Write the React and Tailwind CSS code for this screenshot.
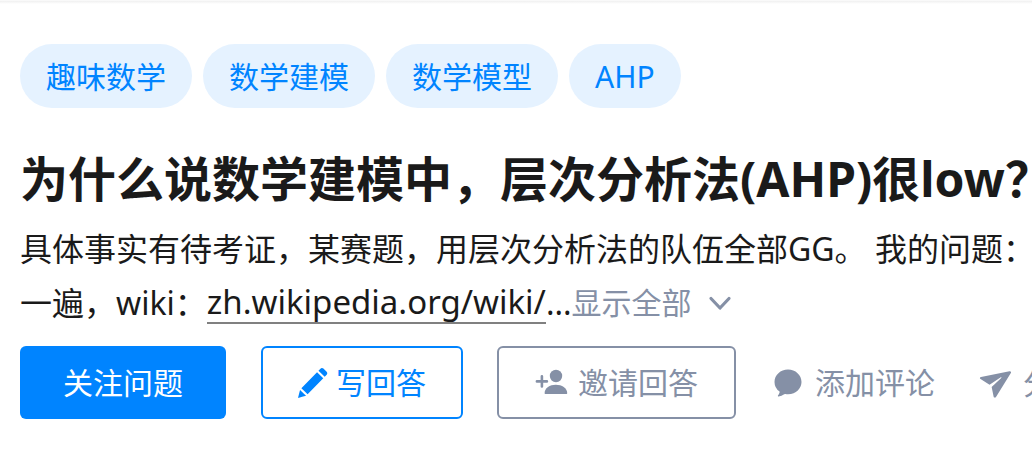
const topics = ['趣味数学', '数学建模', '数学模型', 'AHP'];

function PencilIcon() {
  return (
    <svg viewBox="0 0 12 12" className="size-[30px] shrink-0" fill="currentColor" aria-hidden="true">
      <path d="M.423 10.32L0 12l1.667-.474 1.55-.44-2.4-2.33-.394 1.564zM10.153.233c-.327-.318-.85-.31-1.17.018l-.793.817 2.49 2.414.792-.814c.318-.328.312-.852-.017-1.17l-1.3-1.263zM3.84 10.536L1.35 8.122l6.265-6.46 2.49 2.414-6.265 6.46z" />
    </svg>
  );
}

function InviteIcon() {
  return (
    <svg viewBox="0 0 34 30" className="h-[30px] w-[34px] shrink-0" fill="currentColor" aria-hidden="true">
      <path d="M5.600 8.200a1.300 1.300 0 0 1 2.600 0V12h3.600a1.400 1.400 0 0 1 0 2.800H8.200v3.700a1.300 1.300 0 0 1-2.600 0v-3.700H2a1.400 1.400 0 0 1 0-2.800h3.600z" />
      <circle cx="21" cy="8" r="6.200" />
      <path d="M10.200 26c-.4 0-.6-.3-.6-.7 0-5.300 5.200-8.500 11.200-8.500s11.400 3.200 11.400 8.500c0 .4-.2.7-.6.7z" />
    </svg>
  );
}

function CommentIcon() {
  return (
    <svg viewBox="0 0 24 24" className="size-9 shrink-0" fill="currentColor" aria-hidden="true">
      <path d="M10.241 19.313a.97.97 0 0 0-.77.2 7.908 7.908 0 0 1-3.772 1.482.409.409 0 0 1-.38-.637 5.825 5.825 0 0 0 1.110-2.237.605.605 0 0 0-.227-.590A7.935 7.935 0 0 1 3 11.250C3 6.700 7.030 3 12 3s9 3.700 9 8.250-4.373 9.108-10.759 8.063z" />
    </svg>
  );
}

function ShareIcon() {
  return (
    <svg viewBox="0 0 24 24" className="size-9 shrink-0" fill="currentColor" aria-hidden="true">
      <path d="M2 8L21 4.200c.8-.15 1.300.6.900 1.200L12 21.300c-.5.8-1.500.6-1.600-.3L9.100 14.700l6.400-6c.3-.3.100-.7-.3-.5l-7.500 4.900L1.700 9.400C1 8.900 1.200 8.200 2 8z" />
    </svg>
  );
}

function ChevronIcon() {
  return (
    <svg viewBox="0 0 24 16" className="h-4 w-6" fill="none" stroke="currentColor" strokeWidth="3.2" strokeLinecap="round" strokeLinejoin="round" aria-hidden="true">
      <path d="M3 3.500l9 9.500 9-9.500" />
    </svg>
  );
}

export default function App() {
  return (
    <div className="overflow-hidden bg-white font-['Noto_Sans','Noto_Sans_CJK_SC',sans-serif] text-[#1a1a1a]">
      <div className="h-1 border-t border-[#f9f9f9] bg-linear-to-b from-[#f0f0f0] to-white" />
      <main className="whitespace-nowrap px-5 pt-10 pb-8">
        <nav className="flex gap-[11px]" aria-label="话题">
          {topics.map((topic) => (
            <a key={topic} href="#" className="flex h-16 items-center rounded-full bg-[#e5f2ff] px-[26px] text-[30px] text-[#0084ff]">
              {topic}
            </a>
          ))}
        </nav>
        <h1 className="mt-9 text-[48px] leading-[70px] font-bold">为什么说数学建模中，层次分析法(AHP)很low？</h1>
        <div className="mt-2 text-[32px] leading-[54px]">
          <p>具体事实有待考证，某赛题，用层次分析法的队伍全部GG。 我的问题：</p>
          <p className="flex items-center">
            <span>一遍，wiki：</span>
            <a href="#" className="border-b-2 border-[#808080] text-[33px] leading-10">zh.wikipedia.org/wiki/</a>
            <span>...</span>
            <button type="button" className="flex items-center gap-4 text-[30px] text-[#8590a6]">
              显示全部
              <ChevronIcon />
            </button>
          </p>
        </div>
        <div className="mt-4 flex items-center text-[30px] leading-9 text-[#8590a6]">
          <button type="button" className="h-[73px] shrink-0 rounded-md bg-[#0084ff] px-[43px] text-white">关注问题</button>
          <button type="button" className="ml-[35px] flex h-[73px] shrink-0 items-center gap-2 rounded-md border-2 border-[#0084ff] px-[35px] text-[#0084ff]">
            <PencilIcon />
            写回答
          </button>
          <button type="button" className="ml-[34px] flex h-[73px] shrink-0 items-center gap-[9px] rounded-md border-2 border-[#8590a6] px-9">
            <InviteIcon />
            邀请回答
          </button>
          <button type="button" className="ml-[34px] flex shrink-0 items-center gap-[9px]">
            <CommentIcon />
            添加评论
          </button>
          <button type="button" className="ml-[43px] flex shrink-0 items-center gap-[9px]">
            <ShareIcon />
            分享
          </button>
        </div>
      </main>
    </div>
  );
}
